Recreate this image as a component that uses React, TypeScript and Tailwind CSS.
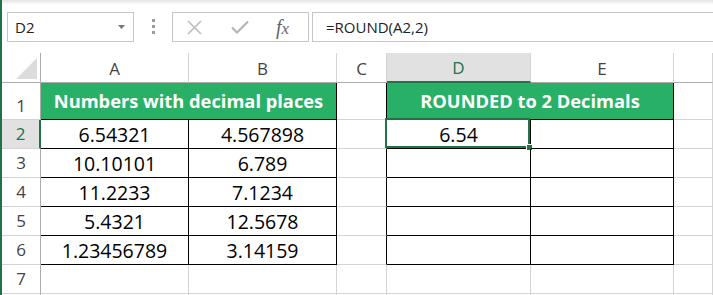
import React from 'react';

const GREEN = 'bg-[#29b067]';

const colHeads = ['', 'A', 'B', 'C', 'D', 'E', ''];

const dataA = ['6.54321', '10.10101', '11.2233', '5.4321', '1.23456789'];
const dataB = ['4.567898', '6.789', '7.1234', '12.5678', '3.14159'];

const RowHead = ({ n, active = false, tall = false }: { n?: number; active?: boolean; tall?: boolean }) => (
  <div
    className={
      'flex justify-center text-[17px] ' +
      (tall ? 'items-end pb-[1px] ' : 'items-center ') +
      (active
        ? 'bg-[#e1e1e1] text-[#217346] border-r-2 border-r-[#217346] border-b border-b-[#d4d4d4]'
        : 'text-[#444] border-r border-r-[#ababab] border-b border-b-[#d4d4d4]')
    }
  >
    {n}
  </div>
);

const Cell = ({ children, className = '' }: { children?: React.ReactNode; className?: string }) => (
  <div className={'relative flex items-center justify-center pt-[1px] text-[19.5px] text-black ' + className}>
    {children}
  </div>
);

export default function App() {
  return (
    <div className="w-[713px] h-[295px] overflow-hidden bg-white border-l-2 border-[#217346] font-['Open_Sans',sans-serif] flex flex-col">
      {/* formula bar */}
      <div className="h-[53px] shrink-0 flex flex-col">
        <div className="h-[5px] bg-linear-to-b from-[#e4e4e4] to-white" />
        <div className="mt-[7px] flex items-start">
          <div className="ml-[5px] w-[127px] h-[30px] border border-[#c6c6c6] flex items-center justify-between pl-[7px] pr-[8px] text-[15px] text-[#222]">
            <span>D2</span>
            <svg width="7" height="4" viewBox="0 0 7 4">
              <path d="M0 0h7L3.5 4z" fill="#777" />
            </svg>
          </div>
          <div className="ml-[18px] mt-[7px] flex flex-col gap-[3px]">
            <div className="w-[3px] h-[3px] bg-[#9c9c9c]" />
            <div className="w-[3px] h-[3px] bg-[#9c9c9c]" />
            <div className="w-[3px] h-[3px] bg-[#9c9c9c]" />
          </div>
          <div className="ml-[17px] w-[137px] h-[30px] border border-[#c6c6c6] flex items-center">
            <svg className="ml-[13px]" width="17" height="15" viewBox="0 0 17 15">
              <path d="M2 1l13 13M15 1L2 14" stroke="#bdbdbd" strokeWidth="1.6" fill="none" />
            </svg>
            <svg className="ml-[28px]" width="18" height="14" viewBox="0 0 18 14">
              <path d="M1 7.5l5 5L17 1.5" stroke="#b5b5b5" strokeWidth="2.2" fill="none" />
            </svg>
            <span className="ml-[27px] font-['Liberation_Serif',serif] italic text-[20px] text-[#666] leading-none">
              f<span className="text-[17px]">x</span>
            </span>
          </div>
          <div className="ml-[3px] flex-1 h-[30px] border-y border-l border-[#c6c6c6] flex items-center pl-[13px] text-[15px] text-[#222]">
            =ROUND(A2,2)
          </div>
        </div>
      </div>

      {/* sheet grid */}
      <div className="grid grid-cols-[39px_148px_148px_50px_144px_143px_1fr] grid-rows-[30px_37px_29px_29px_29px_29px_29px_29px_1fr] flex-1">
        {/* column headers */}
        {colHeads.map((h, i) =>
          i === 0 ? (
            <div key={i} className="relative border-r border-r-[#ababab] border-b border-b-[#ababab]">
              <svg className="absolute right-[3px] bottom-[3px]" width="21" height="21" viewBox="0 0 21 21">
                <path d="M21 0V21H0z" fill="#dcdcdc" />
              </svg>
            </div>
          ) : h === 'D' ? (
            <div key={i} className="flex items-center justify-center pt-[2px] text-[17px] text-[#217346] bg-[#e1e1e1] border-r border-r-[#d4d4d4] border-b-2 border-b-[#217346]">
              {h}
            </div>
          ) : (
            <div key={i} className="flex items-center justify-center pt-[2px] text-[17px] text-[#444] border-r border-r-[#d4d4d4] border-b border-b-[#ababab]">
              {h}
            </div>
          )
        )}

        {/* row 1 */}
        <RowHead n={1} tall />
        <div className={`col-span-2 flex items-center justify-center ${GREEN} text-white font-bold text-[18.3px] border-r border-b border-black`}>
          Numbers with decimal places
        </div>
        <Cell className="border-r border-r-black border-b border-b-[#d4d4d4]" />
        <div className={`col-span-2 flex items-center justify-center ${GREEN} text-white font-bold text-[18.3px] border-r border-b border-black`}>
          ROUNDED to 2 Decimals
        </div>
        <Cell className="border-r border-b border-[#d4d4d4]" />

        {/* rows 2-6 */}
        {dataA.map((a, i) => (
          <React.Fragment key={i}>
            <RowHead n={i + 2} active={i === 0} />
            <Cell className="border-r border-b border-black">{a}</Cell>
            <Cell className="border-r border-b border-black">{dataB[i]}</Cell>
            <Cell className="border-r border-r-black border-b border-b-[#d4d4d4]" />
            <Cell className="border-r border-b border-black">
              {i === 0 && (
                <>
                  6.54
                  <div className="absolute -left-[2px] -top-[2px] right-0 bottom-0 border-2 border-[#217346]" />
                  <div className="absolute -right-[3px] -bottom-[3px] w-[7px] h-[7px] bg-[#217346] border border-white" />
                </>
              )}
            </Cell>
            <Cell className="border-r border-b border-black" />
            <Cell className="border-r border-b border-[#d4d4d4]" />
          </React.Fragment>
        ))}

        {/* rows 7-8 */}
        {[7, 8].map((n) => (
          <React.Fragment key={n}>
            <RowHead n={n === 7 ? n : undefined} />
            {[0, 1, 2, 3, 4, 5].map((c) => (
              <Cell key={c} className="border-r border-b border-[#d4d4d4]" />
            ))}
          </React.Fragment>
        ))}
      </div>
    </div>
  );
}
